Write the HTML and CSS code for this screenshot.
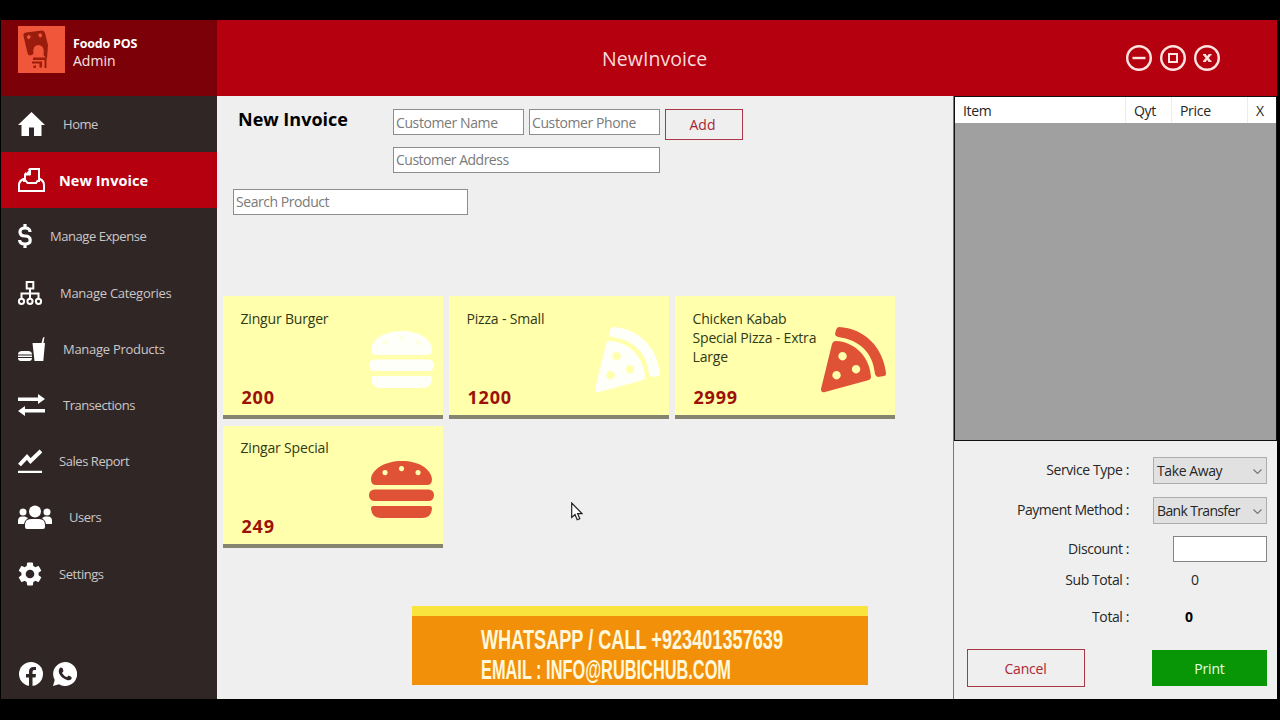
FILE: index.html
```html
<!DOCTYPE html>
<html lang="en">
<head>
<meta charset="utf-8">
<title>Foodo POS</title>
<link rel="stylesheet" href="styles.css">
</head>
<body>
<svg width="0" height="0" class="defs">
  <symbol id="burger" viewBox="0 0 66 58">
    <path fill-rule="evenodd" d="M7 24Q2 24 2 18C3 8 16 0 33 0S62 8 63 18Q63 24 58 24ZM16 9a2.600 2.600 0 1 0 .1 0ZM32.500 5a2.600 2.600 0 1 0 .1 0ZM49 9a2.600 2.600 0 1 0 .1 0Z"/>
    <rect x="0" y="28.500" width="65" height="11.500" rx="5.500"/>
    <path d="M4 45H61Q63 45 63 48Q62 57 53 57H12Q3 57 2 48Q2 45 4 45Z"/>
  </symbol>
  <symbol id="burger-plain" viewBox="0 0 66 58">
    <path d="M7 24Q2 24 2 18C3 8 16 0 33 0S62 8 63 18Q63 24 58 24Z"/>
    <g fill="#ffffe2"><circle cx="16" cy="11.600" r="2.500"/><circle cx="32.500" cy="7.600" r="2.500"/><circle cx="49" cy="11.600" r="2.500"/></g>
    <rect x="0" y="28.500" width="65" height="11.500" rx="5.500"/>
    <path d="M4 45H61Q63 45 63 48Q62 57 53 57H12Q3 57 2 48Q2 45 4 45Z"/>
  </symbol>
  <symbol id="pizza" viewBox="0 0 66 66">
    <path d="M18 0C43 1 62 20 65 46Q65 49 63 49L57 50Q55 50 54 47C52 26 39 13 17 10Q14 9 14 7L15 3Q16 0 18 0Z"/>
    <path fill-rule="evenodd" d="M15 14C35 15 49 31 50 50Q50 52 48 53L4 65Q0 66 0 62L11 17Q12 14 15 14ZM21.500 25a4.200 4.200 0 1 0 .1 0ZM35 38a4.200 4.200 0 1 0 .1 0ZM15.500 44a4.200 4.200 0 1 0 .1 0Z"/>
  </symbol>
</svg>
<div class="window">
  <aside class="sidebar">
    <div class="brand">
      <svg class="logo" viewBox="0 0 47 47"><rect width="47" height="47" fill="#f0573a"/><path fill="#9a1c0c" d="M5.500 10Q5 7 8 6.500L24 4.500Q26.500 4.500 27 7L30 19L29 33L25.500 29Q27 20 21 19Q14 19 15.500 28L12.500 29.500Q10 29.500 9.500 27Z"/><path fill="#f0573a" d="M8.500 11L11 8.500L13 11L10.500 13.500ZM20 8.500L22.500 7L24.500 9.500L22 12Z"/><path fill="#9a1c0c" d="M15 31.500H28.500V42H26.500V34H15ZM14 35.500H24V41.500H21.500V37.500H14ZM15.500 39.500H18V42H15.500Z"/></svg>
      <div class="brand-text"><b>Foodo POS</b><span>Admin</span></div>
    </div>
    <nav>
      <a class="item"><svg width="27" height="24" viewBox="0 0 27 24"><path d="M13.500 0L27 13H23.500V24H16V15.500H11V24H3.500V13H0Z"/></svg><span>Home</span></a>
      <a class="item active"><svg class="line" width="27" height="24" viewBox="0 0 27 24"><path d="M7 12.500V1H21V12.500M7 11H5.500Q1 13 1 17V23H26V17Q26 13 22 11H21M5 13H8L9.500 15H18L19.500 13H22"/><path d="M6 0H11.500L6 6Z" fill="#b5000f" stroke="none"/><path d="M7 7L12.500 1V7Z" fill="#fff" stroke-width="1"/></svg><span>New Invoice</span></a>
      <a class="item"><svg class="line" width="14" height="24" viewBox="0 0 14 24"><path stroke-width="3.200" d="M7 0V4M7 20V24M12 8Q12 4 7 4T2 8T7 12T12.200 16T7 20T1.600 16"/></svg><span>Manage Expense</span></a>
      <a class="item wide-label"><svg class="line" width="24" height="24" viewBox="0 0 24 24"><path d="M8.700 1H15.300V7.500H8.700ZM12 7.500V17M3.500 17V12.500H20.500V17"/><circle cx="3.500" cy="20.300" r="2.600"/><circle cx="12" cy="20.300" r="2.600"/><circle cx="20.500" cy="20.300" r="2.600"/></svg><span>Manage Categories</span></a>
      <a class="item wide-label"><svg width="27" height="24" viewBox="0 0 27 24"><path d="M0 17.500Q0 14 4 14H10Q14 14 14 17.500ZM0 18.500H14V20H0ZM0 21H14Q14 24 11 24H3Q0 24 0 21ZM14.500 6H23.500L25 0.500L26.500 0L25.500 6H27L25.300 24H16.500Z"/></svg><span>Manage Products</span></a>
      <a class="item"><svg width="27" height="22" viewBox="0 0 27 22"><path d="M0 3.500H20V0L27 5L20 10V7H0ZM27 15V18.500H7V22L0 17L7 12V15Z"/></svg><span>Transections</span></a>
      <a class="item tight"><svg class="line" width="24" height="24" viewBox="0 0 24 24"><path d="M0 23H24" stroke-width="2.500"/><path stroke-width="4" d="M1.500 16L9 8L12.500 12L23 2"/></svg><span>Sales Report</span></a>
      <a class="item tight"><svg width="34" height="24" viewBox="0 0 34 24"><circle cx="17" cy="6.500" r="6"/><circle cx="5" cy="7" r="3.500"/><circle cx="29" cy="7" r="3.500"/><path d="M0 19V16Q0 11.500 4 11.500H7L10 13Q7 15 6 19ZM34 19V16Q34 11.500 30 11.500H27L24 13Q27 15 28 19ZM7 22V20Q7 14 13 14H21Q27 14 27 20V22Q27 24 25 24H9Q7 24 7 22Z"/></svg><span>Users</span></a>
      <a class="item tight"><svg width="24" height="24" viewBox="2.300 2 19.400 20"><path d="M19.140 12.940c.04-.3.060-.610.060-.940s-.020-.640-.070-.940l2.030-1.580a.49.490 0 0 0 .12-.610l-1.920-3.320a.49.490 0 0 0-.590-.220l-2.390.960a7 7 0 0 0-1.620-.940L14.400 2.810A.48.480 0 0 0 13.920 2.400h-3.840a.47.470 0 0 0-.470.410L9.250 5.350c-.590.240-1.130.570-1.620.940l-2.390-.960a.48.480 0 0 0-.590.220L2.740 8.870a.47.470 0 0 0 .12.610l2.030 1.580A6 6 0 0 0 4.890 12.940l-2.030 1.580a.49.490 0 0 0-.12.610l1.920 3.320c.12.220.370.290.590.220l2.390-.960c.5.380 1.030.700 1.620.940l.36 2.540c.05.240.240.410.480.410h3.840c.24 0 .44-.170.470-.410l.36-2.540a7 7 0 0 0 1.620-.940l2.390.960c.22.080.470 0 .590-.220l1.920-3.320a.47.470 0 0 0-.12-.610ZM12 15.600a3.600 3.600 0 1 1 0-7.200 3.600 3.600 0 0 1 0 7.200Z"/></svg><span>Settings</span></a>
    </nav>
    <div class="social">
      <svg width="24" height="24" viewBox="0 0 24 24"><circle cx="12" cy="12" r="12"/><path class="cut" d="M10 24V15.500H7V12H10V9.500Q10 5 14.500 5H17V8H15Q13.500 8 13.500 10V12H17L16.500 15.500H13.500V24Z"/></svg>
      <svg width="24" height="24" viewBox="0 0 24 24"><path d="M12 0A12 12 0 1 1 6 22.300L0 24L1.700 18A12 12 0 0 1 12 0Z"/><path class="cut" d="M7.500 5.500L9.500 6L10.500 9L9 11Q11 14.300 14 15.300L15.500 13.500L18.500 15V17Q16.500 19 14 18Q8 16 6 11Q5 7.500 7.500 5.500Z"/></svg>
    </div>
  </aside>
  <div class="body">
    <header class="titlebar">
      <h1>NewInvoice</h1>
      <div class="controls">
        <svg viewBox="0 0 26 26"><circle cx="13" cy="13" r="11.800"/><path d="M6.500 13H19.500"/></svg>
        <svg viewBox="0 0 26 26"><circle cx="13" cy="13" r="11.800"/><path stroke-width="2" d="M9 9H17V17H9Z"/></svg>
        <svg viewBox="0 0 26 26"><circle cx="13" cy="13" r="11.800"/><path stroke-width="2.600" d="M10.700 10L15.700 16M15.700 10L10.700 16"/><path stroke-width="1.400" d="M9 9.700H12M14.500 9.700H17.500M9 16.300H12M14.500 16.300H17.500"/></svg>
      </div>
    </header>
    <div class="content">
      <main>
        <div class="customer">
          <h2>New Invoice</h2>
          <div class="fields">
            <div class="field">Customer Name</div><div class="field">Customer Phone</div>
            <div class="field wide">Customer Address</div>
          </div>
          <div class="add">Add</div>
        </div>
        <div class="field search">Search Product</div>
        <div class="products">
          <div class="card"><p>Zingur Burger</p><b>200</b><svg class="pic burger white"><use href="#burger-plain"/></svg></div>
          <div class="card"><p>Pizza - Small</p><b>1200</b><svg class="pic white"><use href="#pizza"/></svg></div>
          <div class="card"><p>Chicken Kabab<br>Special Pizza - Extra<br>Large</p><b>2999</b><svg class="pic"><use href="#pizza"/></svg></div>
          <div class="card"><p>Zingar Special</p><b>249</b><svg class="pic burger"><use href="#burger"/></svg></div>
        </div>
      </main>
      <section class="order">
        <div class="grid">
          <div class="grid-head"><span>Item</span><span>Qyt</span><span>Price</span><span>X</span></div>
        </div>
        <div class="totals">
          <div class="row"><label>Service Type :</label><div class="select"><span>Take Away</span><svg width="9" height="6" viewBox="0 0 9 6"><path d="M.5 .5L4.500 4.500L8.500 .5"/></svg></div></div>
          <div class="row pay"><label>Payment Method :</label><div class="select"><span>Bank Transfer</span><svg width="9" height="6" viewBox="0 0 9 6"><path d="M.5 .5L4.500 4.500L8.500 .5"/></svg></div></div>
          <div class="row disc"><label>Discount :</label><div class="discount"></div></div>
          <div class="row sub"><label>Sub Total :</label><span class="value">0</span></div>
          <div class="row tot"><label>Total :</label><span class="value strong">0</span></div>
        </div>
        <div class="actions"><div class="cancel">Cancel</div><div class="print">Print</div></div>
      </section>
    </div>
  </div>
</div>
<svg class="cursor" width="12" height="19" viewBox="0 0 12 19"><path d="M.7 1V15.500L4 12.500L6.200 17.800L8.800 16.700L6.600 11.600H11Z"/></svg>
<div class="banner">
  <svg width="456" height="69"><text x="69" y="32.500" textLength="302" lengthAdjust="spacingAndGlyphs">WHATSAPP / CALL +923401357639</text><text x="69" y="62.500" textLength="250" lengthAdjust="spacingAndGlyphs">EMAIL : INFO@RUBICHUB.COM</text></svg>
</div>
</body>
</html>
```

FILE: styles.css
```css
* { box-sizing: border-box; }
body {
  margin: 0;
  width: 1280px;
  height: 720px;
  padding: 20px 3px 21px 1px;
  background: #000;
  overflow: hidden;
  font-family: "Open Sans", "Noto Sans", sans-serif;
  font-size: 14px;
  letter-spacing: -0.2px;
  color: #262626;
}
h1, h2, p { margin: 0; font-weight: 400; }
svg { display: block; flex: none; }
.defs { position: absolute; }
.window { display: flex; height: 679px; background: #efefef; }

.sidebar { width: 216px; background: #302626; display: flex; flex-direction: column; }
.brand { height: 76px; background: #7c0008; display: flex; padding: 6px 0 0 17px; gap: 8px; }
.logo { width: 47px; height: 47px; }
.brand-text { color: #fbe3e1; line-height: 18px; padding-top: 9px; display: flex; flex-direction: column; letter-spacing: 0; }
.brand-text b { font-size: 12.500px; line-height: 17px; color: #fff; letter-spacing: -0.2px; }
.item { height: 56.200px; padding-left: 17px; display: flex; align-items: center; gap: 18px; color: #ccc6c6; font-size: 13px; letter-spacing: -0.45px; }
.item.wide-label { letter-spacing: -0.28px; }
.item.tight { gap: 17px; letter-spacing: -0.45px; }
.item svg { fill: #fff; }
.item svg.line { fill: none; stroke: #fff; stroke-width: 2; }
.item.active { background: #b5000f; color: #fff; font-weight: 700; font-size: 14.500px; letter-spacing: 0.05px; gap: 14px; }
.social { margin-top: auto; display: flex; gap: 10px; padding: 0 0 13px 18px; }
.social svg { fill: #fff; }
.social .cut { fill: #302626; }

.body { flex: 1; display: flex; flex-direction: column; }
.titlebar { height: 76px; background: #b5000f; display: grid; grid-template-columns: 491px 1fr; align-items: center; padding: 0 57px 0 0; }
.titlebar h1 { justify-self: end; width: 106px; color: #fbdcdc; font-size: 19.500px; letter-spacing: 0.05px; white-space: nowrap; }
.controls { justify-self: end; display: flex; gap: 8px; }
.controls svg { width: 26px; height: 26px; fill: none; stroke: #ffe3df; stroke-width: 2.400; }

.content { flex: 1; display: flex; }
main { width: 736px; padding: 13px 0 0 5px; }
.customer { display: flex; height: 80px; }
h2 { width: 171px; padding-left: 16px; font-size: 18px; line-height: 20px; font-weight: 700; color: #000; letter-spacing: 0; }
.fields { display: grid; grid-template-columns: 131px 131px; gap: 12px 5px; align-content: start; width: 267px; }
.field { height: 26px; background: #fff; border: 1px solid #8d8d8d; padding-left: 2px; line-height: 24px; color: #7a7a7a; white-space: nowrap; letter-spacing: -0.45px; }
.fields .field { letter-spacing: -0.5px; }
.fields .field:not(.wide) { line-height: 25px; letter-spacing: -0.4px; }
.field.wide { grid-column: span 2; }
.add { width: 78px; height: 31px; margin-left: 5px; border: 1px solid #a83848; text-align: center; line-height: 29px; color: #a81f35; padding-right: 3px; letter-spacing: 0; }
.search { width: 235px; margin-left: 11px; }
.products { display: grid; grid-template-columns: 220px 220px 220px; gap: 7px 6px; padding: 81px 0 0 1px; }
.card { height: 122.500px; background: #ffffac; border-bottom: 4.500px solid #85856f; position: relative; padding: 12.500px 0 0 17.500px; color: #303a16; }
.card p { line-height: 19px; height: 76px; letter-spacing: -0.18px; }
.card b { display: block; padding-left: 1px; font-size: 18px; line-height: 24px; color: #9c1006; letter-spacing: 0.8px; }
.pic { position: absolute; left: 146px; top: 31px; width: 66px; height: 66px; fill: #df5236; }
.pic.burger { top: 35px; height: 58px; }
.pic.white { fill: #fffffa; }

.order { flex: 1; border-left: 1px solid #777; }
.grid { height: 345px; background: #a0a0a0; border: 1px solid #111; }
.grid-head { height: 26px; background: #fff; display: grid; grid-template-columns: 171px 46px 76px 1fr; grid-template-rows: 26px; line-height: 28px; }
.grid-head span { padding-left: 8px; border-right: 1px solid #ececec; letter-spacing: -0.3px; }
.grid-head span:last-child { border: 0; }
.totals { padding: 15px 10px 0 0; }
.row { display: flex; justify-content: flex-end; align-items: center; height: 28px; line-height: 26px; }
.row label { width: 140px; text-align: right; margin-right: auto; margin-left: 35px; white-space: nowrap; letter-spacing: -0.4px; }
.row:first-child label { padding-bottom: 1px; }
.pay { margin-top: 12px; }
.pay label { letter-spacing: -0.48px; }
.disc { margin-top: 11px; }
.sub { margin-top: 3px; }
.tot { margin-top: 9px; }
.select { width: 114px; height: 27px; border: 1px solid #adadad; background: #e1e1e1; display: flex; align-items: center; justify-content: space-between; padding: 1px 4px 0 3px; white-space: nowrap; letter-spacing: -0.65px; }
.row:first-child .select { letter-spacing: -0.4px; }
.select svg { fill: none; stroke: #777; stroke-width: 1.200; margin-top: 2px; }
.discount { width: 94px; height: 26px; background: #fff; border: 1px solid #858585; }
.value { width: 76px; }
.value.strong { width: 82px; color: #000; font-weight: 700; }
.actions { display: flex; justify-content: space-between; align-items: center; padding: 18px 10px 0 13px; text-align: center; }
.cancel { width: 118px; height: 38px; line-height: 37px; border: 1px solid #a83848; color: #ad2633; padding-right: 1px; }
.print { width: 115px; height: 36px; line-height: 37px; background: #089607; color: #e9ffe6; }

.cursor { position: absolute; left: 571px; top: 502px; fill: #fff; stroke: #222; stroke-width: 1.200; }
.banner { position: absolute; left: 412px; top: 606px; width: 456px; height: 79px; background: #f3900a; border-top: 10px solid #f8e43d; }
.banner svg { overflow: visible; }
.banner text { font: 700 27px "Liberation Sans Narrow", "Liberation Sans", sans-serif; fill: #fff8dc; letter-spacing: 0; }
```
